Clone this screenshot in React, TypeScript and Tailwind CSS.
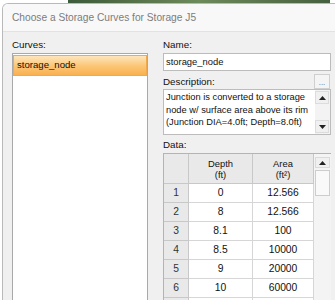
import React from 'react';

const ROWS: [string, string][] = [
  ['0', '12.566'],
  ['8', '12.566'],
  ['8.1', '100'],
  ['8.5', '10000'],
  ['9', '20000'],
  ['10', '60000'],
  ['', ''],
];

function Arrow({ down = false }: { down?: boolean }) {
  return (
    <svg width="7" height="4" viewBox="0 0 7 4" className={down ? 'rotate-180' : ''}>
      <path d="M0 4 L3.5 0 L7 4 Z" fill="#222" />
    </svg>
  );
}

export default function App() {
  return (
    <div
      className="w-[335px] h-[300px] bg-white overflow-hidden flex flex-col"
      style={{ fontFamily: '"Liberation Sans", Arial, sans-serif' }}
    >
      {/* strip of desktop behind the dialog */}
      <div className="flex h-[3px] shrink-0">
        <div className="w-[68px]" />
        <div className="w-[262px] bg-gradient-to-r from-[#3d5a3a] via-[#6d8a5a] to-[#44603f]" />
      </div>

      {/* Dialog */}
      <div className="ml-[2px] flex-1 flex flex-col border-l border-t border-[#b9b9b9] rounded-tl-[6px] overflow-hidden">
        {/* Title bar */}
        <div className="h-[28px] shrink-0 bg-[#f8f8f8] border-b border-[#e2e2e2] flex items-center pl-[9px]">
          <span className="text-[10.2px] text-[#7c7c7c]">Choose a Storage Curves for Storage J5</span>
        </div>

        <div className="flex-1 bg-[#f0f0f0] flex pl-[9px] pt-[5px]">
          {/* Curves list */}
          <div className="w-[136px] flex flex-col shrink-0">
            <div className="h-[15px] text-[9.8px] text-[#111] leading-[15px]">Curves:</div>
            <div className="mt-[1px] flex-1 bg-white border border-[#a9a9a9] border-b-0 pt-[1px]">
              <div className="h-[21px] border border-[#f0a94c] bg-gradient-to-b from-[#fde6bd] via-[#fcc777] to-[#f9b04f] flex items-center pl-[3px] text-[9.6px] text-[#111]">
                storage_node
              </div>
            </div>
          </div>

          {/* Right column */}
          <div className="ml-[15px] w-[168px] flex flex-col shrink-0">
            <div className="h-[15px] text-[9.8px] text-[#111] leading-[15px]">Name:</div>
            <div className="mt-[1px] h-[18px] bg-white border border-[#bcbcbc] flex items-center pl-[2px] text-[9.4px] text-[#111]">
              storage_node
            </div>

            <div className="mt-[2px] h-[16px] flex items-center justify-between">
              <span className="text-[9.8px] text-[#111] leading-[15px]">Description:</span>
              <div className="w-[16px] h-[15px] bg-[#f4f4f4] border border-[#cfcfcf] flex items-end justify-center text-[8px] leading-[10px] text-[#666] mr-[1px]">
                ...
              </div>
            </div>

            <div className="h-[46px] bg-white border border-[#bcbcbc] flex">
              <div className="flex-1 pl-[2px] pt-[1px] text-[9.3px] leading-[12.5px] text-[#111] whitespace-nowrap overflow-hidden">
                Junction is converted to a storage
                <br />
                node w/ surface area above its rim
                <br />
                (Junction DIA=4.0ft; Depth=8.0ft)
              </div>
              <div className="w-[15px] bg-[#f3f3f3] flex flex-col justify-between py-[1px] pr-[1px]">
                <div className="h-[13px] border border-[#dcdcdc] bg-[#f0f0f0] flex items-center justify-center">
                  <Arrow />
                </div>
                <div className="h-[13px] border border-[#dcdcdc] bg-[#f0f0f0] flex items-center justify-center">
                  <Arrow down />
                </div>
              </div>
            </div>

            <div className="mt-[1px] h-[17px] text-[9.8px] text-[#111] leading-[17px]">Data:</div>

            {/* Table */}
            <div className="flex-1 flex border-l border-t border-[#b4b4b4]">
              <div className="flex flex-col">
                <div className="flex h-[30px] shrink-0">
                  <div className="w-[25px] bg-[#e9e9e9] border-r border-b border-[#c8c8c8]" />
                  <div className="w-[64px] bg-[#e9e9e9] border-r border-b border-[#c8c8c8] flex flex-col items-center justify-center text-[9.4px] leading-[11px] text-[#111]">
                    <span>Depth</span>
                    <span>(ft)</span>
                  </div>
                  <div className="w-[61px] bg-[#e9e9e9] border-r border-b border-[#c8c8c8] flex flex-col items-center justify-center text-[9.4px] leading-[11px] text-[#111]">
                    <span>Area</span>
                    <span>(ft²)</span>
                  </div>
                </div>
                {ROWS.map(([d, a], i) => (
                  <div key={i} className="flex h-[19px] shrink-0 text-[10.3px] text-[#111]">
                    <div className="w-[25px] bg-[#e9e9e9] border-r border-b border-[#c8c8c8] flex items-center justify-center text-[#333]">
                      {i < 6 ? i + 1 : ''}
                    </div>
                    <div className="w-[64px] bg-white border-r border-b border-[#d6d6d6] flex items-center justify-center">{d}</div>
                    <div className="w-[61px] bg-white border-r border-b border-[#d6d6d6] flex items-center justify-center">{a}</div>
                  </div>
                ))}
              </div>
              {/* table scrollbar */}
              <div className="w-[17px] bg-[#f4f4f4] flex flex-col items-center pt-[3px]">
                <div className="w-[15px] h-[11px] border border-[#dadada] bg-[#f0f0f0] flex items-center justify-center">
                  <Arrow />
                </div>
                <div className="mt-[2px] w-[15px] h-[26px] border border-[#cdcdcd] bg-[#f9f9f9]" />
              </div>
            </div>
          </div>
        </div>
      </div>
    </div>
  );
}
